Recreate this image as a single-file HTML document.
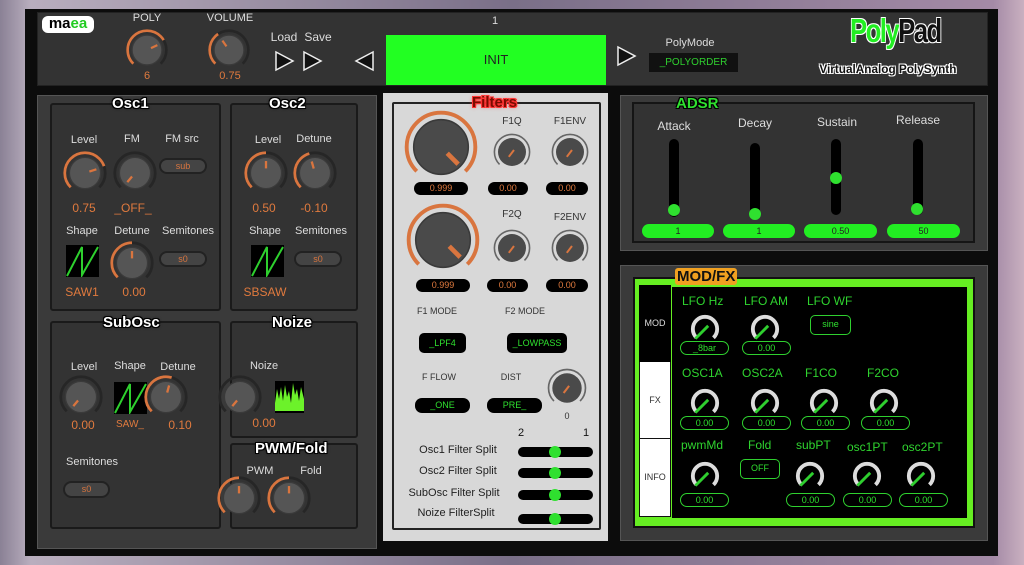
<!DOCTYPE html>
<html><head><meta charset="utf-8"><style>
*{margin:0;padding:0;box-sizing:border-box}
body{width:1024px;height:565px;overflow:hidden;position:relative;font-family:"Liberation Sans",sans-serif;background:linear-gradient(90deg,#8a8195 0%,#b9aebe 3%,#7a6f88 50%,#a48aa6 97%,#c9b0c0 100%)}
.a{position:absolute}
.t{position:absolute;font-size:11px;color:#ddd;white-space:nowrap;text-align:center}
.o{color:#e07a3e}
.g{color:#2fe02f}
.box{position:absolute;background:#333;border:2px solid #1a1a1a;border-radius:3px}
.ttl{position:absolute;font-weight:bold;font-size:15px;color:#fff;text-shadow:-1px -1px 0 #000,1px -1px 0 #000,-1px 1px 0 #000,1px 1px 0 #000,0 0 3px #000;white-space:nowrap}
.pill{position:absolute;border-radius:9px;font-size:9px;text-align:center}
svg.k{position:absolute}
.v{position:absolute;background:#000;border-radius:8px;color:#e07a3e;font-size:9px;text-align:center;height:13px;line-height:13px}
.mp{position:absolute;border:1.5px solid #2fd02f;border-radius:8px;color:#2fe02f;font-size:9px;text-align:center;height:14px;line-height:12px;background:#000}
.ml{position:absolute;color:#2fd42f;font-size:12px;white-space:nowrap}
.tr{position:absolute;background:#000;border-radius:5px}
.dot{position:absolute;width:12px;height:12px;border-radius:50%;background:#2fe02f}
</style></head><body>
<div class="a" style="left:25px;top:9px;width:973px;height:547px;background:#0c0c0c"></div>
<!-- top bar -->
<div class="a" style="left:37px;top:12px;width:951px;height:74px;background:#333;border:1px solid #222"></div>
<div class="a" style="left:42px;top:16px;width:52px;height:17px;background:#fff;border-radius:6px;font-weight:bold;font-size:15px;line-height:16px;text-align:center;color:#000">ma<span style="color:#2c2">ea</span></div>
<div class="t" style="left:127px;top:12px;width:40px">POLY</div>
<div class="t" style="left:200px;top:12px;width:60px">VOLUME</div>
<svg class="k" style="left:125px;top:28px" width="44" height="44" viewBox="-50 -50 100 100"><circle r="44" fill="none" stroke="#262626" stroke-width="6" pathLength="100" stroke-dasharray="75 100" transform="rotate(135)"/><circle r="44" fill="none" stroke="#d9753f" stroke-width="6" pathLength="100" stroke-dasharray="54 100" transform="rotate(135)"/><circle r="34" fill="#555" stroke="#3a3a3a" stroke-width="3"/><line x1="0" y1="-10" x2="0" y2="-26" stroke="#d9753f" stroke-width="5" transform="rotate(65)"/></svg>
<svg class="k" style="left:207px;top:28px" width="44" height="44" viewBox="-50 -50 100 100"><circle r="44" fill="none" stroke="#262626" stroke-width="6" pathLength="100" stroke-dasharray="75 100" transform="rotate(135)"/><circle r="44" fill="none" stroke="#d9753f" stroke-width="6" pathLength="100" stroke-dasharray="28 100" transform="rotate(135)"/><circle r="34" fill="#555" stroke="#3a3a3a" stroke-width="3"/><line x1="0" y1="-10" x2="0" y2="-26" stroke="#d9753f" stroke-width="5" transform="rotate(-35)"/></svg>
<div class="t o" style="left:137px;top:70px;width:20px;font-size:11px">6</div>
<div class="t o" style="left:214px;top:70px;width:32px;font-size:11px">0.75</div>
<div class="t" style="left:268px;top:30px;width:32px;font-size:12px">Load</div>
<div class="t" style="left:302px;top:30px;width:32px;font-size:12px">Save</div>
<svg class="a" style="left:274px;top:50px" width="60" height="22"><path d="M2 2 L19 11 L2 20Z M30 2 L47 11 L30 20Z" fill="#111" stroke="#eee" stroke-width="1.5"/></svg>
<svg class="a" style="left:353px;top:50px" width="22" height="22"><path d="M20 2 L3 11 L20 20Z" fill="#111" stroke="#eee" stroke-width="1.5"/></svg>
<div class="t" style="left:485px;top:15px;width:20px;font-size:11px">1</div>
<div class="a" style="left:386px;top:35px;width:220px;height:50px;background:#22ff22;color:#222;font-size:13px;text-align:center;line-height:50px">INIT</div>
<svg class="a" style="left:616px;top:45px" width="22" height="22"><path d="M2 2 L19 11 L2 20Z" fill="#111" stroke="#eee" stroke-width="1.5"/></svg>
<div class="t" style="left:650px;top:37px;width:80px;font-size:11px">PolyMode</div>
<div class="a" style="left:649px;top:53px;width:89px;height:19px;background:#111;color:#2fd02f;font-size:10px;text-align:center;line-height:19px">_POLYORDER</div>
<div class="a" style="left:850px;top:12px;font-size:33px;font-weight:bold;letter-spacing:-2px;transform:scaleX(0.78);transform-origin:left;text-shadow:-1px -1px 0 #fff,1px -1px 0 #fff,-1px 1px 0 #fff,1px 1px 0 #fff"><span style="color:#22ee22">Poly</span><span style="color:#111">Pad</span></div>
<div class="a" style="left:818px;top:62px;font-size:12px;font-weight:bold;color:#111;text-shadow:-1px -1px 0 #fff,1px -1px 0 #fff,-1px 1px 0 #fff,1px 1px 0 #fff;transform:scaleX(0.98)">VirtualAnalog PolySynth</div>

<!-- left panel -->
<div class="a" style="left:37px;top:95px;width:340px;height:454px;background:#3a3a3a;border:1px solid #555"></div>
<div class="box" style="left:50px;top:103px;width:171px;height:208px"></div>
<div class="box" style="left:230px;top:103px;width:128px;height:208px"></div>
<div class="box" style="left:50px;top:321px;width:171px;height:208px"></div>
<div class="box" style="left:230px;top:321px;width:128px;height:117px"></div>
<div class="box" style="left:230px;top:443px;width:128px;height:86px"></div>
<div class="ttl" style="left:112px;top:95px">Osc1</div>
<div class="ttl" style="left:269px;top:95px">Osc2</div>
<div class="ttl" style="left:103px;top:314px">SubOsc</div>
<div class="ttl" style="left:272px;top:314px">Noize</div>
<div class="ttl" style="left:255px;top:440px">PWM/Fold</div>

<div class="t" style="left:66px;top:134px;width:36px">Level</div>
<div class="t" style="left:117px;top:133px;width:30px">FM</div>
<div class="t" style="left:160px;top:133px;width:44px">FM src</div>
<div class="pill" style="left:159px;top:158px;width:48px;height:16px;background:#444;border:2px solid #222;color:#d9753f;line-height:12px">sub</div>
<svg class="k" style="left:62px;top:150px" width="46" height="46" viewBox="-50 -50 100 100"><circle r="44" fill="none" stroke="#262626" stroke-width="6" pathLength="100" stroke-dasharray="75 100" transform="rotate(135)"/><circle r="44" fill="none" stroke="#d9753f" stroke-width="6" pathLength="100" stroke-dasharray="57 100" transform="rotate(135)"/><circle r="34" fill="#555" stroke="#3a3a3a" stroke-width="3"/><line x1="0" y1="-10" x2="0" y2="-26" stroke="#d9753f" stroke-width="5" transform="rotate(72)"/></svg>
<svg class="k" style="left:112px;top:150px" width="46" height="46" viewBox="-50 -50 100 100"><circle r="44" fill="none" stroke="#262626" stroke-width="6" pathLength="100" stroke-dasharray="75 100" transform="rotate(135)"/><circle r="34" fill="#555" stroke="#3a3a3a" stroke-width="3"/><line x1="0" y1="-10" x2="0" y2="-26" stroke="#d9753f" stroke-width="5" transform="rotate(-140)"/></svg>
<div class="t o" style="left:66px;top:201px;width:36px;font-size:12px">0.75</div>
<div class="t o" style="left:108px;top:201px;width:50px;font-size:12px">_OFF_</div>
<div class="t" style="left:60px;top:225px;width:44px">Shape</div>
<div class="t" style="left:110px;top:225px;width:44px">Detune</div>
<div class="t" style="left:160px;top:225px;width:56px">Semitones</div>
<svg class="a" style="left:66px;top:245px" width="33" height="32"><rect width="33" height="32" fill="#000"/><path d="M1 31 L16 2 L16 30 L32 2" fill="none" stroke="#2ed02e" stroke-width="2"/></svg>
<svg class="k" style="left:109px;top:240px" width="46" height="46" viewBox="-50 -50 100 100"><circle r="44" fill="none" stroke="#262626" stroke-width="6" pathLength="100" stroke-dasharray="75 100" transform="rotate(135)"/><circle r="44" fill="none" stroke="#d9753f" stroke-width="6" pathLength="100" stroke-dasharray="37.5 100" transform="rotate(135)"/><circle r="34" fill="#555" stroke="#3a3a3a" stroke-width="3"/><line x1="0" y1="-10" x2="0" y2="-26" stroke="#d9753f" stroke-width="5"/></svg>
<div class="pill" style="left:159px;top:251px;width:48px;height:16px;background:#444;border:2px solid #222;color:#d9753f;line-height:12px">s0</div>
<div class="t o" style="left:60px;top:285px;width:44px;font-size:12px">SAW1</div>
<div class="t o" style="left:114px;top:285px;width:40px;font-size:12px">0.00</div>

<div class="t" style="left:250px;top:134px;width:36px">Level</div>
<div class="t" style="left:290px;top:133px;width:48px">Detune</div>
<svg class="k" style="left:243px;top:150px" width="46" height="46" viewBox="-50 -50 100 100"><circle r="44" fill="none" stroke="#262626" stroke-width="6" pathLength="100" stroke-dasharray="75 100" transform="rotate(135)"/><circle r="44" fill="none" stroke="#d9753f" stroke-width="6" pathLength="100" stroke-dasharray="37.5 100" transform="rotate(135)"/><circle r="34" fill="#555" stroke="#3a3a3a" stroke-width="3"/><line x1="0" y1="-10" x2="0" y2="-26" stroke="#d9753f" stroke-width="5"/></svg>
<svg class="k" style="left:292px;top:150px" width="46" height="46" viewBox="-50 -50 100 100"><circle r="44" fill="none" stroke="#262626" stroke-width="6" pathLength="100" stroke-dasharray="75 100" transform="rotate(135)"/><circle r="44" fill="none" stroke="#d9753f" stroke-width="6" pathLength="100" stroke-dasharray="33 100" transform="rotate(135)"/><circle r="34" fill="#555" stroke="#3a3a3a" stroke-width="3"/><line x1="0" y1="-10" x2="0" y2="-26" stroke="#d9753f" stroke-width="5" transform="rotate(-16)"/></svg>
<div class="t o" style="left:246px;top:201px;width:36px;font-size:12px">0.50</div>
<div class="t o" style="left:294px;top:201px;width:40px;font-size:12px">-0.10</div>
<div class="t" style="left:243px;top:225px;width:44px">Shape</div>
<div class="t" style="left:292px;top:225px;width:58px">Semitones</div>
<svg class="a" style="left:251px;top:245px" width="33" height="32"><rect width="33" height="32" fill="#000"/><path d="M1 31 L16 2 L16 30 L32 2" fill="none" stroke="#2ed02e" stroke-width="2"/></svg>
<div class="pill" style="left:294px;top:251px;width:48px;height:16px;background:#444;border:2px solid #222;color:#d9753f;line-height:12px">s0</div>
<div class="t o" style="left:240px;top:285px;width:50px;font-size:12px">SBSAW</div>

<div class="t" style="left:66px;top:361px;width:36px">Level</div>
<div class="t" style="left:110px;top:360px;width:40px">Shape</div>
<div class="t" style="left:156px;top:361px;width:44px">Detune</div>
<svg class="k" style="left:58px;top:374px" width="46" height="46" viewBox="-50 -50 100 100"><circle r="44" fill="none" stroke="#262626" stroke-width="6" pathLength="100" stroke-dasharray="75 100" transform="rotate(135)"/><circle r="34" fill="#555" stroke="#3a3a3a" stroke-width="3"/><line x1="0" y1="-10" x2="0" y2="-26" stroke="#d9753f" stroke-width="5" transform="rotate(-140)"/></svg>
<svg class="a" style="left:114px;top:382px" width="33" height="32"><rect width="33" height="32" fill="#000"/><path d="M1 31 L16 2 L16 30 L32 2" fill="none" stroke="#2ed02e" stroke-width="2"/></svg>
<svg class="k" style="left:143px;top:374px" width="46" height="46" viewBox="-50 -50 100 100"><circle r="44" fill="none" stroke="#262626" stroke-width="6" pathLength="100" stroke-dasharray="75 100" transform="rotate(135)"/><circle r="44" fill="none" stroke="#d9753f" stroke-width="6" pathLength="100" stroke-dasharray="42 100" transform="rotate(135)"/><circle r="34" fill="#555" stroke="#3a3a3a" stroke-width="3"/><line x1="0" y1="-10" x2="0" y2="-26" stroke="#d9753f" stroke-width="5" transform="rotate(15)"/></svg>
<div class="t o" style="left:65px;top:418px;width:36px;font-size:12px">0.00</div>
<div class="t o" style="left:110px;top:419px;width:40px;font-size:10px">SAW_</div>
<div class="t o" style="left:162px;top:418px;width:36px;font-size:12px">0.10</div>
<div class="t" style="left:60px;top:456px;width:64px">Semitones</div>
<div class="pill" style="left:63px;top:481px;width:47px;height:17px;background:#444;border:2px solid #222;color:#d9753f;line-height:13px">s0</div>

<div class="t" style="left:244px;top:360px;width:40px">Noize</div>
<svg class="k" style="left:217px;top:374px" width="46" height="46" viewBox="-50 -50 100 100"><circle r="44" fill="none" stroke="#262626" stroke-width="6" pathLength="100" stroke-dasharray="75 100" transform="rotate(135)"/><circle r="34" fill="#555" stroke="#3a3a3a" stroke-width="3"/><line x1="0" y1="-10" x2="0" y2="-26" stroke="#d9753f" stroke-width="5" transform="rotate(-140)"/></svg>
<svg class="a" style="left:275px;top:381px" width="29" height="32"><rect width="29" height="32" fill="#000"/><path d="M0 22 L2 8 L4 18 L6 6 L8 20 L10 4 L12 16 L14 10 L16 22 L18 2 L20 14 L22 8 L24 20 L26 6 L29 18 L29 30 L0 30Z" fill="#6cf22a"/></svg>
<div class="t o" style="left:244px;top:416px;width:40px;font-size:12px">0.00</div>

<div class="t" style="left:240px;top:465px;width:40px">PWM</div>
<div class="t" style="left:291px;top:465px;width:40px">Fold</div>
<svg class="k" style="left:216px;top:475px" width="46" height="46" viewBox="-50 -50 100 100"><circle r="44" fill="none" stroke="#262626" stroke-width="6" pathLength="100" stroke-dasharray="75 100" transform="rotate(135)"/><circle r="44" fill="none" stroke="#d9753f" stroke-width="6" pathLength="100" stroke-dasharray="37.5 100" transform="rotate(135)"/><circle r="34" fill="#555" stroke="#3a3a3a" stroke-width="3"/><line x1="0" y1="-10" x2="0" y2="-26" stroke="#d9753f" stroke-width="5"/></svg>
<svg class="k" style="left:266px;top:475px" width="46" height="46" viewBox="-50 -50 100 100"><circle r="44" fill="none" stroke="#262626" stroke-width="6" pathLength="100" stroke-dasharray="75 100" transform="rotate(135)"/><circle r="44" fill="none" stroke="#d9753f" stroke-width="6" pathLength="100" stroke-dasharray="37.5 100" transform="rotate(135)"/><circle r="34" fill="#555" stroke="#3a3a3a" stroke-width="3"/><line x1="0" y1="-10" x2="0" y2="-26" stroke="#d9753f" stroke-width="5"/></svg>

<!-- filters -->
<div class="a" style="left:383px;top:93px;width:225px;height:448px;background:#d8d8d8"></div>
<div class="a" style="left:392px;top:102px;width:209px;height:428px;border:2px solid #222;border-radius:2px"></div>
<div class="ttl" style="left:472px;top:94px;color:#7a0c00;text-shadow:-1px -1px 0 #f33,1px -1px 0 #f33,-1px 1px 0 #f33,1px 1px 0 #f33,0 0 4px #f44;font-size:15px">Filters</div>
<svg class="k" style="left:402px;top:108px" width="78" height="78" viewBox="-50 -50 100 100"><circle r="44" fill="none" stroke="#d9753f" stroke-width="5" pathLength="100" stroke-dasharray="75 100" transform="rotate(135)"/><circle r="35" fill="#4a4a4a" stroke="#3a3a3a" stroke-width="2"/><line x1="8" y1="8" x2="22" y2="22" stroke="#d9753f" stroke-width="6"/></svg>
<svg class="k" style="left:404px;top:201px" width="78" height="78" viewBox="-50 -50 100 100"><circle r="44" fill="none" stroke="#d9753f" stroke-width="5" pathLength="100" stroke-dasharray="75 100" transform="rotate(135)"/><circle r="35" fill="#4a4a4a" stroke="#3a3a3a" stroke-width="2"/><line x1="8" y1="8" x2="22" y2="22" stroke="#d9753f" stroke-width="6"/></svg>
<div class="t" style="left:497px;top:116px;width:30px;font-size:10px;color:#333">F1Q</div>
<div class="t" style="left:550px;top:116px;width:40px;font-size:10px;color:#333">F1ENV</div>
<div class="t" style="left:497px;top:209px;width:30px;font-size:10px;color:#333">F2Q</div>
<div class="t" style="left:550px;top:212px;width:40px;font-size:10px;color:#333">F2ENV</div>
<svg class="k" style="left:492px;top:132px" width="40" height="40" viewBox="-50 -50 100 100"><circle r="44" fill="none" stroke="#666" stroke-width="4" pathLength="100" stroke-dasharray="75 100" transform="rotate(135)"/><circle r="35" fill="#4a4a4a"/><line x1="5" y1="-5" x2="-8" y2="12" stroke="#d9753f" stroke-width="5"/></svg>
<svg class="k" style="left:550px;top:132px" width="40" height="40" viewBox="-50 -50 100 100"><circle r="44" fill="none" stroke="#666" stroke-width="4" pathLength="100" stroke-dasharray="75 100" transform="rotate(135)"/><circle r="35" fill="#4a4a4a"/><line x1="5" y1="-5" x2="-8" y2="12" stroke="#d9753f" stroke-width="5"/></svg>
<svg class="k" style="left:492px;top:228px" width="40" height="40" viewBox="-50 -50 100 100"><circle r="44" fill="none" stroke="#666" stroke-width="4" pathLength="100" stroke-dasharray="75 100" transform="rotate(135)"/><circle r="35" fill="#4a4a4a"/><line x1="5" y1="-5" x2="-8" y2="12" stroke="#d9753f" stroke-width="5"/></svg>
<svg class="k" style="left:550px;top:228px" width="40" height="40" viewBox="-50 -50 100 100"><circle r="44" fill="none" stroke="#666" stroke-width="4" pathLength="100" stroke-dasharray="75 100" transform="rotate(135)"/><circle r="35" fill="#4a4a4a"/><line x1="5" y1="-5" x2="-8" y2="12" stroke="#d9753f" stroke-width="5"/></svg>
<div class="v" style="left:414px;top:182px;width:54px">0.999</div>
<div class="v" style="left:488px;top:182px;width:40px">0.00</div>
<div class="v" style="left:546px;top:182px;width:42px">0.00</div>
<div class="v" style="left:416px;top:279px;width:54px">0.999</div>
<div class="v" style="left:487px;top:279px;width:41px">0.00</div>
<div class="v" style="left:546px;top:279px;width:42px">0.00</div>
<div class="t" style="left:412px;top:306px;width:50px;font-size:9px;color:#333">F1 MODE</div>
<div class="t" style="left:500px;top:306px;width:50px;font-size:9px;color:#333">F2 MODE</div>
<div class="a" style="left:419px;top:333px;width:47px;height:20px;background:#000;border-radius:5px;color:#2fe02f;font-size:9px;text-align:center;line-height:20px">_LPF4</div>
<div class="a" style="left:507px;top:333px;width:60px;height:20px;background:#000;border-radius:5px;color:#2fe02f;font-size:9px;text-align:center;line-height:20px">_LOWPASS</div>
<div class="t" style="left:414px;top:372px;width:50px;font-size:9px;color:#333">F FLOW</div>
<div class="t" style="left:491px;top:372px;width:40px;font-size:9px;color:#333">DIST</div>
<div class="a" style="left:415px;top:398px;width:55px;height:15px;background:#000;border-radius:7px;color:#2fe02f;font-size:9px;text-align:center;line-height:15px">_ONE</div>
<div class="a" style="left:487px;top:398px;width:55px;height:15px;background:#000;border-radius:7px;color:#2fe02f;font-size:9px;text-align:center;line-height:15px">PRE_</div>
<svg class="k" style="left:546px;top:367px" width="42" height="42" viewBox="-50 -50 100 100"><circle r="44" fill="none" stroke="#666" stroke-width="4" pathLength="100" stroke-dasharray="75 100" transform="rotate(135)"/><circle r="35" fill="#4a4a4a"/><line x1="5" y1="-5" x2="-8" y2="12" stroke="#d9753f" stroke-width="5"/></svg>
<div class="t" style="left:562px;top:411px;width:10px;font-size:9px;color:#333">0</div>
<div class="t" style="left:515px;top:427px;width:12px;font-size:11px;color:#111">2</div>
<div class="t" style="left:580px;top:427px;width:12px;font-size:11px;color:#111">1</div>
<div class="t" style="left:404px;top:444px;width:108px;font-size:11px;color:#222">Osc1 Filter Split</div>
<div class="t" style="left:404px;top:465px;width:108px;font-size:11px;color:#222">Osc2 Filter Split</div>
<div class="t" style="left:398px;top:487px;width:112px;font-size:11px;color:#222">SubOsc Filter Split</div>
<div class="t" style="left:402px;top:507px;width:108px;font-size:11px;color:#222">Noize FilterSplit</div>
<div class="tr" style="left:518px;top:447px;width:75px;height:10px"></div>
<div class="tr" style="left:518px;top:468px;width:75px;height:10px"></div>
<div class="tr" style="left:518px;top:490px;width:75px;height:10px"></div>
<div class="tr" style="left:518px;top:514px;width:75px;height:10px"></div>
<div class="dot" style="left:549px;top:446px"></div>
<div class="dot" style="left:549px;top:467px"></div>
<div class="dot" style="left:549px;top:489px"></div>
<div class="dot" style="left:549px;top:513px"></div>

<!-- ADSR -->
<div class="a" style="left:620px;top:95px;width:368px;height:156px;background:#3a3a3a;border:1px solid #555"></div>
<div class="a" style="left:632px;top:102px;width:343px;height:141px;background:#333;border:2px solid #151515"></div>
<div class="ttl" style="left:676px;top:95px;color:#2fe02f;text-shadow:-1px -1px 0 #000,1px -1px 0 #000,-1px 1px 0 #000,1px 1px 0 #000">ADSR</div>
<div class="t" style="left:652px;top:119px;width:44px;font-size:12px">Attack</div>
<div class="t" style="left:733px;top:116px;width:44px;font-size:12px">Decay</div>
<div class="t" style="left:814px;top:115px;width:46px;font-size:12px">Sustain</div>
<div class="t" style="left:893px;top:113px;width:50px;font-size:12px">Release</div>
<div class="tr" style="left:669px;top:139px;width:10px;height:78px"></div>
<div class="tr" style="left:750px;top:143px;width:10px;height:75px"></div>
<div class="tr" style="left:831px;top:139px;width:10px;height:76px"></div>
<div class="tr" style="left:913px;top:139px;width:10px;height:76px"></div>
<div class="dot" style="left:668px;top:204px"></div>
<div class="dot" style="left:749px;top:208px"></div>
<div class="dot" style="left:830px;top:172px"></div>
<div class="dot" style="left:911px;top:203px"></div>
<div class="pill" style="left:642px;top:224px;width:72px;height:14px;background:#22ee22;color:#222;line-height:14px">1</div>
<div class="pill" style="left:723px;top:224px;width:72px;height:14px;background:#22ee22;color:#222;line-height:14px">1</div>
<div class="pill" style="left:804px;top:224px;width:73px;height:14px;background:#22ee22;color:#222;line-height:14px">0.50</div>
<div class="pill" style="left:887px;top:224px;width:73px;height:14px;background:#22ee22;color:#222;line-height:14px">50</div>

<!-- MOD/FX -->
<div class="a" style="left:620px;top:265px;width:368px;height:276px;background:#3a3a3a;border:1px solid #555"></div>
<div class="a" style="left:633px;top:277px;width:342px;height:251px;background:#66ee22;border:2px solid #111"></div>
<div class="a" style="left:672px;top:287px;width:295px;height:231px;background:#000"></div>
<div class="a" style="left:675px;top:268px;background:#f0a020;color:#111;font-weight:bold;font-size:15px;padding:0 2px;border-radius:3px;line-height:17px">MOD/FX</div>
<div class="a" style="left:639px;top:285px;width:32px;height:232px;background:#fff;border:1px solid #111"></div>
<div class="a" style="left:639px;top:285px;width:32px;height:77px;background:#000"></div>
<div class="a" style="left:639px;top:438px;width:32px;height:1px;background:#111"></div>
<div class="t" style="left:639px;top:318px;width:32px;font-size:9px;color:#ddd">MOD</div>
<div class="t" style="left:639px;top:395px;width:32px;font-size:9px;color:#333">FX</div>
<div class="t" style="left:639px;top:472px;width:32px;font-size:9px;color:#333">INFO</div>
<div class="ml" style="left:682px;top:294px">LFO Hz</div>
<div class="ml" style="left:744px;top:294px">LFO AM</div>
<div class="ml" style="left:807px;top:294px">LFO WF</div>
<div class="ml" style="left:682px;top:366px">OSC1A</div>
<div class="ml" style="left:742px;top:366px">OSC2A</div>
<div class="ml" style="left:805px;top:366px">F1CO</div>
<div class="ml" style="left:867px;top:366px">F2CO</div>
<div class="ml" style="left:681px;top:438px">pwmMd</div>
<div class="ml" style="left:748px;top:438px">Fold</div>
<div class="ml" style="left:796px;top:438px">subPT</div>
<div class="ml" style="left:847px;top:440px">osc1PT</div>
<div class="ml" style="left:902px;top:440px">osc2PT</div>
<div class="mp" style="left:810px;top:315px;width:41px;height:20px;line-height:17px;border-radius:5px">sine</div>
<div class="mp" style="left:740px;top:459px;width:40px;height:20px;line-height:17px;border-radius:5px">OFF</div>
<svg width="0" height="0" style="position:absolute"><defs><g id="mk"><circle r="38" fill="none" stroke="#ddd" stroke-width="12" pathLength="100" stroke-dasharray="75 100" transform="rotate(135)"/><line x1="10" y1="-10" x2="-30" y2="30" stroke="#2fcf2f" stroke-width="9"/></g></defs></svg>
<svg class="k" style="left:689px;top:313px" width="32" height="32" viewBox="-50 -50 100 100"><use href="#mk"/></svg>
<svg class="k" style="left:749px;top:313px" width="32" height="32" viewBox="-50 -50 100 100"><use href="#mk"/></svg>
<svg class="k" style="left:689px;top:387px" width="32" height="32" viewBox="-50 -50 100 100"><use href="#mk"/></svg>
<svg class="k" style="left:749px;top:387px" width="32" height="32" viewBox="-50 -50 100 100"><use href="#mk"/></svg>
<svg class="k" style="left:808px;top:387px" width="32" height="32" viewBox="-50 -50 100 100"><use href="#mk"/></svg>
<svg class="k" style="left:868px;top:387px" width="32" height="32" viewBox="-50 -50 100 100"><use href="#mk"/></svg>
<svg class="k" style="left:689px;top:460px" width="32" height="32" viewBox="-50 -50 100 100"><use href="#mk"/></svg>
<svg class="k" style="left:794px;top:460px" width="32" height="32" viewBox="-50 -50 100 100"><use href="#mk"/></svg>
<svg class="k" style="left:851px;top:460px" width="32" height="32" viewBox="-50 -50 100 100"><use href="#mk"/></svg>
<svg class="k" style="left:905px;top:460px" width="32" height="32" viewBox="-50 -50 100 100"><use href="#mk"/></svg>
<div class="mp" style="left:680px;top:341px;width:49px">_8bar</div>
<div class="mp" style="left:742px;top:341px;width:49px">0.00</div>
<div class="mp" style="left:680px;top:416px;width:49px">0.00</div>
<div class="mp" style="left:742px;top:416px;width:49px">0.00</div>
<div class="mp" style="left:801px;top:416px;width:49px">0.00</div>
<div class="mp" style="left:861px;top:416px;width:49px">0.00</div>
<div class="mp" style="left:680px;top:493px;width:49px">0.00</div>
<div class="mp" style="left:786px;top:493px;width:49px">0.00</div>
<div class="mp" style="left:843px;top:493px;width:49px">0.00</div>
<div class="mp" style="left:899px;top:493px;width:49px">0.00</div>
</body></html>
